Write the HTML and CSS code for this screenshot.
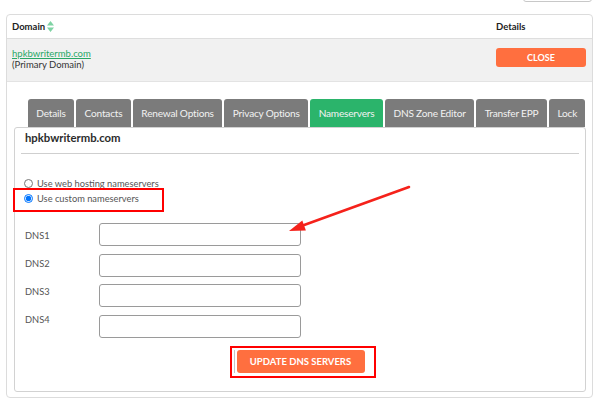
FILE: index.html
```html
<!DOCTYPE html>
<html>
<head>
<meta charset="utf-8">
<link rel="stylesheet" href="styles.css">
</head>
<body>
<div class="top-strip"><div class="top-box"></div></div>
<div class="card">
  <div class="thead">
    <div class="cell">Domain <svg class="sort" width="7" height="11" viewBox="0 0 7 11"><path d="M3.5 0 L7 4.5 H0 Z M3.5 11 L7 6.5 H0 Z" fill="#7fd3a4"/></svg></div>
    <div class="cell">Details</div>
  </div>
  <div class="trow">
    <div class="cell dom">
      <a class="dlink" href="#">hpkbwritermb.com</a>
      <div class="primary">(Primary Domain)</div>
    </div>
    <div class="cell act"><button class="close">CLOSE</button></div>
  </div>
  <div class="details">
    <div class="tabs">
      <div class="tab">Details</div>
      <div class="tab">Contacts</div>
      <div class="tab">Renewal Options</div>
      <div class="tab">Privacy Options</div>
      <div class="tab active">Nameservers</div>
      <div class="tab">DNS Zone Editor</div>
      <div class="tab">Transfer EPP</div>
      <div class="tab">Lock</div>
    </div>
    <div class="panel">
      <div class="ptitle">hpkbwritermb.com</div>
      <div class="hr"></div>
      <div class="radios">
        <label class="radio"><input type="radio" name="ns"> Use web hosting nameservers</label>
        <label class="radio"><input type="radio" name="ns" checked> Use custom nameservers</label>
      </div>
      <div class="dnsform">
        <div class="labels">
          <div class="lbl">DNS1</div>
          <div class="lbl">DNS2</div>
          <div class="lbl">DNS3</div>
          <div class="lbl">DNS4</div>
        </div>
        <div class="inputs">
          <input class="inp" type="text">
          <input class="inp" type="text">
          <input class="inp" type="text">
          <input class="inp" type="text">
        </div>
      </div>
      <div class="btnrow">
        <div class="annot-btn"><div class="btn-frame"><button class="update">UPDATE DNS SERVERS</button></div></div>
      </div>
    </div>
  </div>
</div>
<div class="annot-radio"></div>
<svg class="arrow" width="600" height="408" viewBox="0 0 600 408">
  <line x1="409" y1="187" x2="300" y2="226.5" stroke="#f5221b" stroke-width="2.6" stroke-linecap="round"/>
  <polygon points="289,231 302.3,220.6 305.9,230.4" fill="#f5221b"/>
</svg>
</body>
</html>
```

FILE: styles.css
```css
html, body {
  margin: 0;
  padding: 0;
  background: #fff;
  width: 600px;
  height: 408px;
  overflow: hidden;
  position: relative;
  font-family: Lato, "Open Sans", sans-serif;
  color: #333;
}

.top-strip {
  height: 14px;
  display: flex;
  justify-content: flex-end;
  padding-right: 8px;
}
.top-box {
  width: 69px;
  height: 22px;
  margin-top: -20px;
  box-sizing: border-box;
  border: 1px solid #c8c8c8;
  border-radius: 3px;
}

.card {
  margin: 0 7px 0 6px;
  border: 1px solid #dcdcdc;
  border-radius: 4px;
  height: 384px;
  box-sizing: border-box;
}

.thead, .trow {
  display: grid;
  grid-template-columns: 1fr 101px;
}
.thead {
  height: 23px;
  border-bottom: 1px solid #dedede;
  font-size: 9.5px;
  font-weight: 700;
  color: #222;
  align-items: center;
}
.thead .cell {
  padding-left: 5px;
  display: flex;
  align-items: center;
  gap: 2px;
}
.sort { display: block; }

.trow {
  height: 43px;
  background: #f1f1f1;
  border-bottom: 1px solid #e3e3e3;
  box-sizing: border-box;
}
.dom {
  padding: 9px 0 0 5px;
  font-size: 9.5px;
  line-height: 11px;
}
.dlink {
  color: #2aa866;
  text-decoration: underline;
}
.primary { color: #333; }
.act {
  padding: 9px 5px 0 5px;
}
.close {
  display: block;
  width: 90px;
  height: 19px;
  border: none;
  border-radius: 3px;
  background: #ff6f3f;
  color: #fff;
  font-family: Lato, sans-serif;
  font-weight: 700;
  font-size: 9px;
  padding: 0;
}

.details {
  padding: 17px 6px 0 7px;
}
.tabs {
  display: flex;
  gap: 2.4px;
  padding-left: 14px;
  height: 28px;
}
.tab {
  flex: none;
  white-space: nowrap;
  background: #7b7b7b;
  color: #f2f2f2;
  font-size: 10.1px;
  line-height: 28px;
  padding: 0 8.3px;
  border-radius: 3px 3px 0 0;
  letter-spacing: -0.2px;
}
.tab.active {
  background: #2bb46b;
}

.panel {
  border: 1px solid #d2d2d2;
  border-radius: 3px;
  height: 265px;
  box-sizing: border-box;
  padding: 2px 6px 0 6px;
}
.ptitle {
  font-size: 11.3px;
  font-weight: 700;
  line-height: 16px;
  padding-left: 4px;
  color: #2b2b2b;
}
.hr {
  height: 1px;
  background: #cfcfcf;
  margin-top: 7px;
}
.radios {
  margin-top: 22px;
  display: flex;
  flex-direction: column;
}
.radio {
  display: flex;
  align-items: center;
  height: 15px;
  font-size: 9.3px;
  color: #555;
  padding-left: 3px;
}
.radio input {
  width: 9px;
  height: 9px;
  margin: 0 4px 0 0;
}
.dnsform {
  display: flex;
  margin-top: 17px;
}
.labels {
  width: 78px;
  box-sizing: border-box;
  padding: 7px 0 0 4px;
  display: flex;
  flex-direction: column;
  gap: 16px;
}
.lbl {
  font-size: 9.3px;
  line-height: 12px;
  color: #555;
}
.inputs {
  display: flex;
  flex-direction: column;
  gap: 7.7px;
}
.inp {
  width: 202px;
  height: 23px;
  box-sizing: border-box;
  border: 1px solid #9a9a9a;
  border-radius: 3px;
  margin: 0;
  padding: 0;
  background: #fff;
}
.btnrow {
  display: flex;
  justify-content: center;
  margin-top: 8px;
  padding-left: 5px;
}
.annot-btn {
  border: 2px solid #f00;
  padding: 2px 9px 3px 2px;
}
.btn-frame {
  border-left: 1px solid #c4c4c4;
  padding-left: 2px;
}
.update {
  display: block;
  width: 128px;
  height: 23px;
  border: none;
  border-radius: 3px;
  background: #ff6f3f;
  color: #fff;
  font-family: Lato, sans-serif;
  font-weight: 700;
  font-size: 9.5px;
  padding: 0;
}

.annot-radio {
  position: absolute;
  left: 13px;
  top: 188px;
  width: 151px;
  height: 24px;
  box-sizing: border-box;
  border: 2px solid #f00;
}
.arrow {
  position: absolute;
  left: 0;
  top: 0;
  pointer-events: none;
}
```
